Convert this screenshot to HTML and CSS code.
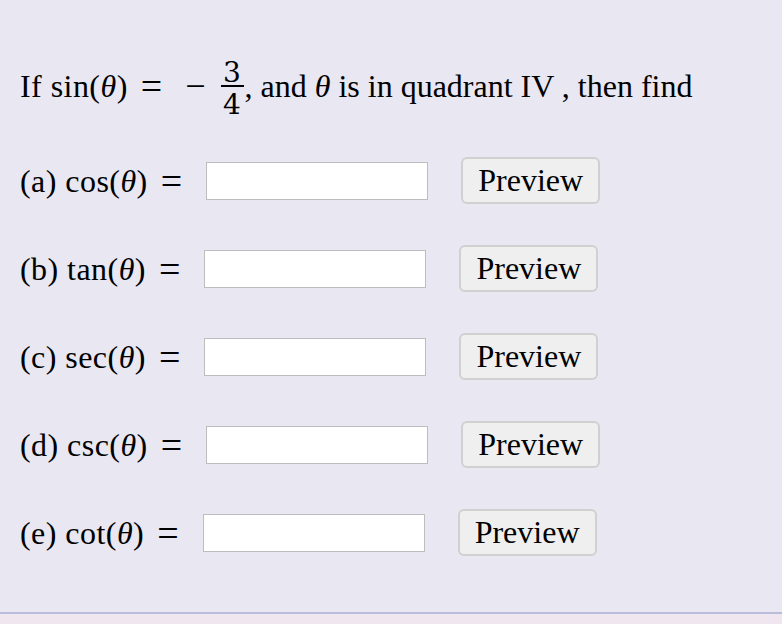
FILE: index.html
```html
<!DOCTYPE html>
<html>
<head>
<meta charset="utf-8">
<link rel="stylesheet" href="styles.css">
</head>
<body>
<div class="page">
  <div class="problem">
    <div class="intro">
      <span class="m wide">If sin(<i>θ</i>)</span>
      <span class="eq">=</span>
      <span class="minus">−</span>
      <span class="frac"><span class="num">3</span><span class="bar"></span><span class="den">4</span></span>
      <span class="m">, and <i>θ</i> is in quadrant IV , then find</span>
    </div>
    <div class="row">
      <span class="m wide">(a) cos(<i>θ</i>)</span><span class="eq">=</span>
      <input class="answer" type="text">
      <button class="preview">Preview</button>
    </div>
    <div class="row">
      <span class="m wide">(b) tan(<i>θ</i>)</span><span class="eq">=</span>
      <input class="answer" type="text">
      <button class="preview">Preview</button>
    </div>
    <div class="row">
      <span class="m wide">(c) sec(<i>θ</i>)</span><span class="eq">=</span>
      <input class="answer" type="text">
      <button class="preview">Preview</button>
    </div>
    <div class="row">
      <span class="m wide">(d) csc(<i>θ</i>)</span><span class="eq">=</span>
      <input class="answer" type="text">
      <button class="preview">Preview</button>
    </div>
    <div class="row">
      <span class="m wide">(e) cot(<i>θ</i>)</span><span class="eq">=</span>
      <input class="answer" type="text">
      <button class="preview">Preview</button>
    </div>
  </div>
  <div class="rule"></div>
  <div class="below"></div>
</div>
</body>
</html>
```
FILE: styles.css
```css
html, body {
  margin: 0;
  padding: 0;
}
body {
  background: #efe6f0;
  font-family: "Liberation Serif", "Times New Roman", serif;
  color: #000;
}
.page {
  width: 782px;
}
.problem {
  background: #e8e7f2;
  height: 612px;
  padding-left: 20px;
  box-sizing: border-box;
  padding-top: 40px;
}
.intro {
  display: flex;
  align-items: center;
  height: 92px;
}
.m {
  font-size: 32px;
  line-height: 32px;
  white-space: pre;
}
.m.wide {
  letter-spacing: 0.45px;
}
.m i {
  font-style: italic;
}
.eq {
  font-family: "Liberation Serif", "Times New Roman", serif;
  font-size: 38px;
  line-height: 32px;
  margin: 0 13px 0 13px;
}
.intro .eq {
  margin-right: 23px;
}
.minus {
  font-family: "Liberation Serif", "Times New Roman", serif;
  font-size: 36px;
  line-height: 32px;
  margin-right: 15px;
}
.frac {
  display: flex;
  flex-direction: column;
  align-items: center;
  width: 23px;
  padding-top: 5px;
  margin-right: 1px;
}
.num, .den {
  font-family: "DejaVu Serif", "Liberation Serif", serif;
  font-size: 28px;
  line-height: 21px;
  height: 21px;
}
.bar {
  width: 23px;
  height: 2px;
  background: #000;
  margin: 2px 0 7px 0;
}
.row {
  display: flex;
  align-items: center;
  height: 47px;
  margin-top: 41px;
}
.intro + .row {
  margin-top: 25px;
}
.answer {
  width: 222px;
  height: 38px;
  box-sizing: border-box;
  border: 1px solid #bdbdbd;
  background: #fff;
  margin: 0 0 0 11px;
  padding: 0;
}
.preview {
  margin-left: 33px;
  width: 139px;
  height: 47px;
  box-sizing: border-box;
  border: 2px solid #d0d0d0;
  border-radius: 6px;
  background: #efefef;
  font-family: "Liberation Serif", "Times New Roman", serif;
  font-size: 32px;
  color: #000;
  padding: 0;
}
.rule {
  height: 2px;
  background: #bcbcdc;
}
.below {
  height: 10px;
}
```
